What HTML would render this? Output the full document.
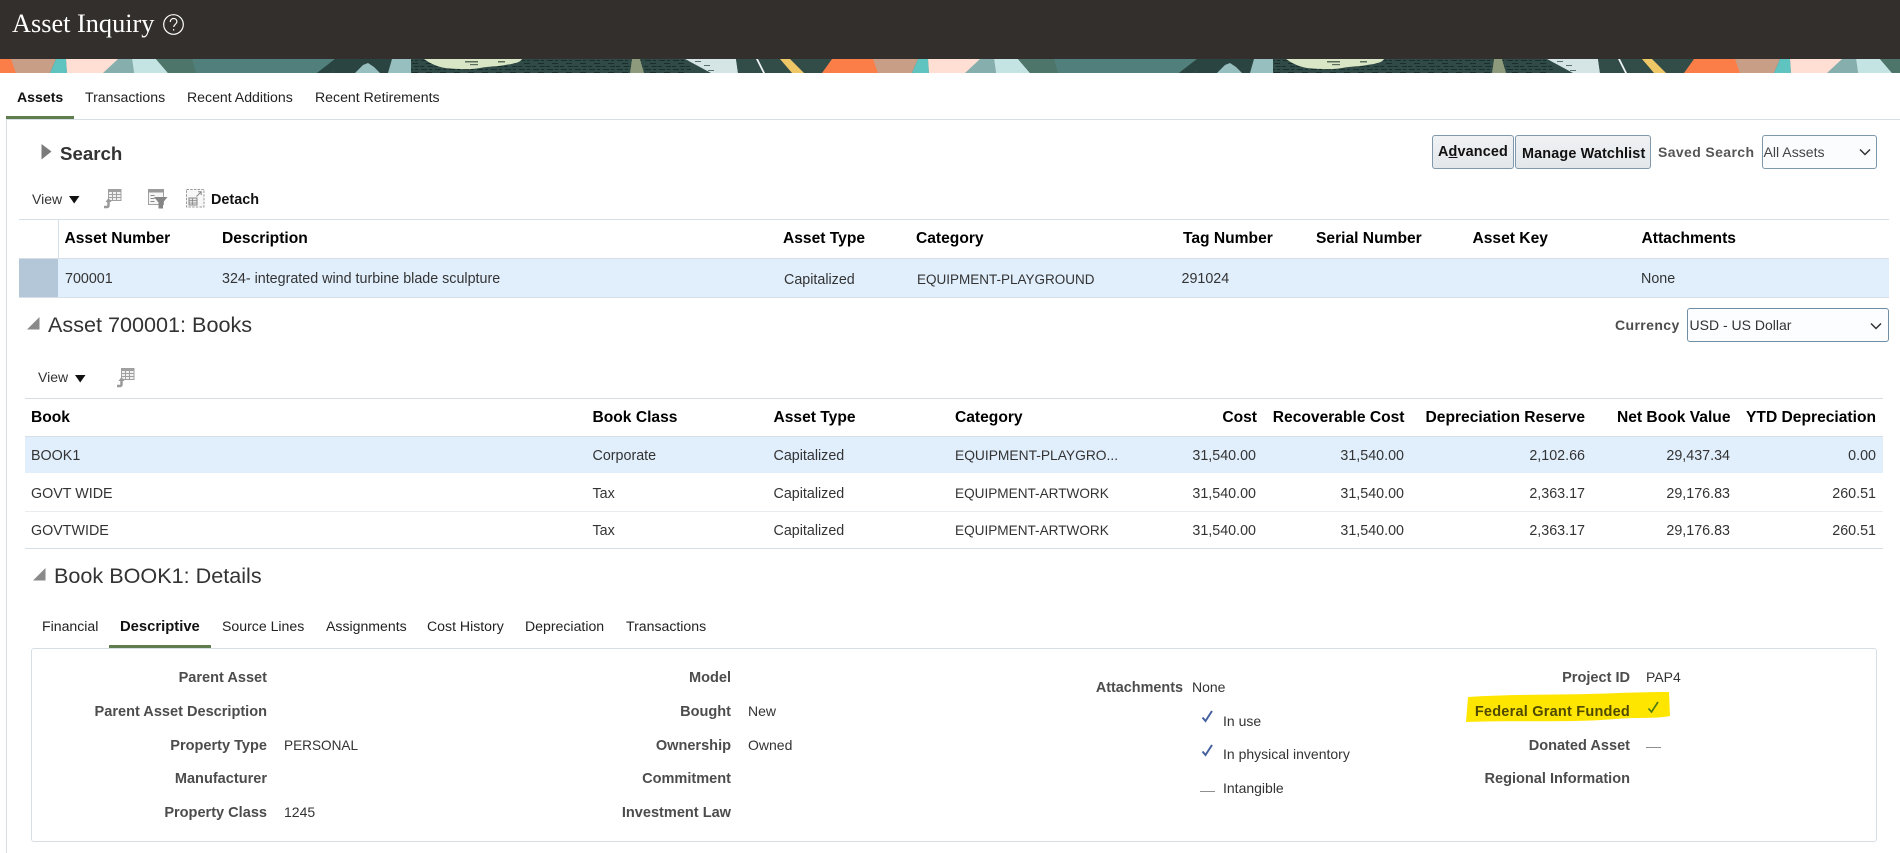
<!DOCTYPE html>
<html lang="en"><head><meta charset="utf-8"><title>Asset Inquiry</title>
<style>
html,body{margin:0;padding:0;background:#fff;width:1900px;height:853px;overflow:hidden}
body{position:relative;font-family:"Liberation Sans",sans-serif;color:#333;font-size:14.3px}
.t{position:absolute;line-height:20px;height:20px;white-space:nowrap}
.r{text-align:right}
.b{font-weight:bold;color:#000;font-size:15.6px}
.l{font-weight:bold;color:#4c4c4c;font-size:14.55px;text-align:right}
.tab{font-size:14.1px;color:#222}
.h{font-size:21.6px;color:#333;line-height:26px;height:26px}
.u{font-size:13.6px}
.box{position:absolute;box-sizing:border-box}
.ln{position:absolute;background:#d6dfe6}
svg{position:absolute;overflow:visible}
svg.clip{overflow:hidden}
</style></head><body>

<div class="box" style="left:0;top:0;width:1900px;height:59px;background:#332f2c"></div>
<svg class="clip" style="left:0;top:59px" width="1900" height="14" viewBox="0 0 1900 14">
<defs>
<pattern id="sp" width="14" height="9" patternUnits="userSpaceOnUse"><rect x="1" y="1" width="6" height="1" fill="#1a2e2b"/><rect x="9" y="1" width="3" height="1" fill="#1a2e2b"/><rect x="6" y="4" width="6" height="1" fill="#1a2e2b"/><rect x="0" y="7" width="4" height="1" fill="#1a2e2b"/><rect x="8" y="7" width="5" height="1" fill="#1a2e2b"/></pattern>
<g id="tile">
<rect x="0" y="0" width="862" height="14" fill="#2f4a46"/>
<polygon points="-30,0 15,0 18,14 -40,14" fill="#fb7e48"/>
<polygon points="11,0 56,0 50,14 16,14" fill="#c99e87"/>
<polygon points="56,0 66,0 67,14 50,14" fill="#5fc4bf"/>
<polygon points="66,0 132,0 104,14 67,14" fill="#ffdfd3"/>
<polygon points="118,0 132,0 134,14 103,14" fill="#86aeac"/>
<polygon points="132,0 156,0 168,14 134,14" fill="#c4e4e3"/>
<polygon points="156,0 200,0 199,14 168,14" fill="#4d7569"/>
<polygon points="192,0 335,0 317,14 196,14" fill="#517f7b"/>
<rect x="335" y="0" width="60" height="14" fill="#2a4541"/>
<polygon points="317,14 335,0 345,0 330,14" fill="#2a4541"/>
<polygon points="355,14 363,6 368,4 374,8 380,14" fill="#98bfbf"/>
<polygon points="388,14 392,0 411,0 411,14" fill="#98bfbf"/>
<rect x="411" y="0" width="300" height="14" fill="#304b47"/>
<rect x="411" y="0" width="280" height="14" fill="url(#sp)"/>
<path d="M424 0H522C520 4 512 5 505 6C495 8 490 7 480 9C470 11 455 10 445 9C435 7 430 4 424 0Z" fill="#d8e6c5"/>
<g fill="#5c6e5a"><rect x="465" y="2" width="13" height="1.500"/><rect x="498" y="2" width="7" height="1.500"/><rect x="470" y="5" width="8" height="1.200"/></g>
<polygon points="632,0 640,0 644,14 630,14" fill="#8d9b7c"/>
<polygon points="685,0 736,0 738,14 711,14" fill="#d5e5e5"/>
<g fill="#56706e"><rect x="695" y="2" width="6" height="1"/><rect x="704" y="6" width="6" height="1"/><rect x="708" y="11" width="6" height="1"/></g>
<polygon points="736,0 836,0 827,14 738,14" fill="#324c48"/>
<polygon points="756,0 758,0 765,14 763,14" fill="#eef4f3"/>
<polygon points="780,0 790,0 804,14 792,14" fill="#eec766"/>
<polygon points="836,0 862,0 862,14 825,14" fill="#fb7e48"/>
</g>
</defs>
<use href="#tile" x="0"/><use href="#tile" x="862"/><use href="#tile" x="1724"/>
</svg>

<div class="t" style="left:12px;top:10px;height:28px;line-height:28px;font-family:'Liberation Serif',serif;font-size:26.3px;color:#fff">Asset Inquiry</div>
<svg style="left:163px;top:14px" width="22" height="22" viewBox="0 0 22 22"><circle cx="10.500" cy="10.500" r="9.800" fill="none" stroke="#fff" stroke-width="1.200"/><path d="M7.300 8c0-2.200 1.500-3.500 3.300-3.500s3.300 1.200 3.300 3.200c0 2.400-3.200 2.800-3.200 5.300" fill="none" stroke="#fff" stroke-width="1.200"/><rect x="10" y="15" width="1.200" height="1.500" fill="#fff"/></svg>

<!-- main tabs -->
<div class="t tab" style="left:17px;top:87px;font-weight:bold;color:#111">Assets</div>
<div class="t tab" style="left:85px;top:87px">Transactions</div>
<div class="t tab" style="left:187px;top:87px">Recent Additions</div>
<div class="t tab" style="left:315px;top:87px">Recent Retirements</div>
<div class="ln" style="left:6px;top:119px;width:1894px;height:1px"></div>
<div class="box" style="left:6px;top:116px;width:68px;height:3px;background:#5f7d4f"></div>
<div class="ln" style="left:6px;top:119px;width:1px;height:734px"></div>

<!-- search -->
<svg style="left:41px;top:144px" width="11" height="16"><polygon points="0.500,0 10.500,7.500 0.500,15.500" fill="#7b7b7b"/></svg>
<div class="t" style="left:60px;top:143.500px;font-weight:bold;font-size:18.7px;color:#333">Search</div>

<div class="box" style="left:1432px;top:135px;width:82px;height:34px;border:1px solid #7f98ab;border-radius:3px;background:linear-gradient(#f0f2f4,#e3e7ea)"></div>
<div class="t" style="left:1438px;top:142px;font-weight:bold;color:#111;font-size:14.4px;letter-spacing:.15px">A<u>d</u>vanced</div>
<div class="box" style="left:1515px;top:135px;width:136px;height:34px;border:1px solid #7f98ab;border-radius:3px;background:linear-gradient(#f0f2f4,#e3e7ea)"></div>
<div class="t" style="left:1522px;top:144px;font-weight:bold;color:#111;font-size:14.4px;letter-spacing:.15px">Manage Watchlist</div>
<div class="t" style="left:1658px;top:142px;font-weight:bold;color:#555;font-size:14px;letter-spacing:.38px">Saved Search</div>
<div class="box" style="left:1762px;top:135px;width:115px;height:34px;border:1px solid #7d97aa;border-radius:3px;background:#fbfcfe"></div>
<div class="t" style="left:1763.500px;top:142px;color:#444;font-size:14.1px">All Assets</div>
<svg style="left:1859px;top:148px" width="12" height="8"><path d="M1 1.500L6 6.500L11 1.500" fill="none" stroke="#333" stroke-width="1.500"/></svg>

<!-- toolbar -->
<div class="t" style="left:32px;top:189px;font-size:14px">View</div>
<svg style="left:68px;top:196px" width="12" height="8"><polygon points="1,0 11.500,0 6.200,7.500" fill="#111"/></svg>
<svg style="left:103px;top:189px" width="19" height="20" viewBox="0 0 19 20"><rect x="5.500" y="0.500" width="12.500" height="11" fill="#f0f0f0" stroke="#a0a0a0"/><rect x="5.500" y="0.500" width="12.500" height="2.500" fill="#a0a0a0"/><path d="M5.500 5.500h12.500M5.500 8.500h12.500M9.500 0.500v11M13.500 0.500v11" stroke="#a0a0a0" stroke-width="1"/><path d="M1 18h3c1 0 1.500-.8 1.500-2v-4" fill="none" stroke="#9a9a9a" stroke-width="2.500"/><polygon points="2.500,13 5.500,9 8.500,13" fill="#9a9a9a"/></svg>
<svg style="left:148px;top:189px" width="20" height="20" viewBox="0 0 20 20"><rect x="0.500" y="0.500" width="15" height="15" fill="#f5f5f5" stroke="#a0a0a0"/><rect x="0.500" y="0.500" width="15" height="3" fill="#999"/><path d="M2.500 6.500h4M2.500 9.500h4M2.500 12.500h4" stroke="#888"/><polygon points="6,8 19.500,8 15,13.500 15,19.500 10.500,19.500 10.500,13.500" fill="#858585"/></svg>
<svg style="left:186px;top:189px" width="19" height="19" viewBox="0 0 19 19"><rect x="0.500" y="0.500" width="17.500" height="17.500" fill="#f7f7f7" stroke="#9a9a9a" stroke-dasharray="2.500 1.200"/><rect x="3" y="9" width="8" height="7" fill="#e6e6e6" stroke="#888"/><path d="M3 11.500h8M3 14h8M6.500 9v7" stroke="#888" stroke-width=".8"/><path d="M10.500 7.500L15 3M12 2.800h3.200V6" fill="none" stroke="#888"/></svg>
<div class="t" style="left:211px;top:190px;font-weight:bold;color:#111;font-size:14.4px">Detach</div>

<!-- table 1 -->
<div class="ln" style="left:19px;top:219px;width:1870px;height:1px"></div>
<div class="ln" style="left:58px;top:219px;width:1px;height:39px"></div>
<div class="ln" style="left:19px;top:258px;width:1870px;height:1px"></div>
<div class="box" style="left:19px;top:259px;width:1870px;height:38px;background:#e1effd"></div>
<div class="box" style="left:19px;top:259px;width:39px;height:38px;background:#b4c7d8"></div>
<div class="ln" style="left:19px;top:297px;width:1870px;height:1px"></div>
<div class="t b" style="left:64.500px;top:229px">Asset Number</div>
<div class="t b" style="left:222px;top:229px">Description</div>
<div class="t b" style="left:783px;top:229px">Asset Type</div>
<div class="t b" style="left:916px;top:229px">Category</div>
<div class="t b" style="left:1183px;top:229px">Tag Number</div>
<div class="t b" style="left:1316px;top:229px">Serial Number</div>
<div class="t b" style="left:1472.500px;top:229px">Asset Key</div>
<div class="t b" style="left:1641.500px;top:229px">Attachments</div>
<div class="t" style="left:65px;top:269px">700001</div>
<div class="t" style="left:222px;top:269px">324- integrated wind turbine blade sculpture</div>
<div class="t" style="left:784px;top:270px">Capitalized</div>
<div class="t u" style="left:917px;top:270px;font-size:13.500px">EQUIPMENT-PLAYGROUND</div>
<div class="t" style="left:1181.500px;top:269px">291024</div>
<div class="t" style="left:1641px;top:269px">None</div>

<!-- books -->
<svg style="left:27px;top:317px" width="13" height="13"><polygon points="12.500,0 12.500,12.500 0,12.500" fill="#8a8a8a"/></svg>
<div class="t h" style="left:48px;top:311.500px">Asset 700001: Books</div>
<div class="t" style="left:1615px;top:315px;font-weight:bold;color:#4c4c4c;font-size:14px;letter-spacing:.4px">Currency</div>
<div class="box" style="left:1687px;top:308px;width:202px;height:34px;border:1px solid #6f8da3;border-radius:3px;background:#fbfdff"></div>
<div class="t" style="left:1689.500px;top:315px;font-size:14px;color:#333">USD - US Dollar</div>
<svg style="left:1870px;top:322px" width="12" height="8"><path d="M1 1.500L6 6.500L11 1.500" fill="none" stroke="#333" stroke-width="1.500"/></svg>

<div class="t" style="left:38px;top:367px;font-size:14px">View</div>
<svg style="left:74px;top:375px" width="12" height="8"><polygon points="1,0 11.500,0 6.200,7.500" fill="#111"/></svg>
<svg style="left:116px;top:368px" width="19" height="20" viewBox="0 0 19 20"><rect x="5.500" y="0.500" width="12.500" height="11" fill="#f0f0f0" stroke="#a0a0a0"/><rect x="5.500" y="0.500" width="12.500" height="2.500" fill="#a0a0a0"/><path d="M5.500 5.500h12.500M5.500 8.500h12.500M9.500 0.500v11M13.500 0.500v11" stroke="#a0a0a0" stroke-width="1"/><path d="M1 18h3c1 0 1.500-.8 1.500-2v-4" fill="none" stroke="#9a9a9a" stroke-width="2.500"/><polygon points="2.500,13 5.500,9 8.500,13" fill="#9a9a9a"/></svg>

<div class="ln" style="left:25px;top:398px;width:1858px;height:1px"></div>
<div class="ln" style="left:25px;top:436px;width:1858px;height:1px"></div>
<div class="box" style="left:25px;top:437px;width:1858px;height:36px;background:#e1effd"></div>
<div class="box" style="left:25px;top:511px;width:1858px;height:1px;background:#e9edf0"></div>
<div class="ln" style="left:25px;top:548px;width:1858px;height:1px"></div>

<div class="t b" style="left:31px;top:408px">Book</div>
<div class="t b" style="left:592.500px;top:408px">Book Class</div>
<div class="t b" style="left:773.500px;top:408px">Asset Type</div>
<div class="t b" style="left:955px;top:408px">Category</div>
<div class="t b r" style="right:643px;top:408px">Cost</div>
<div class="t b r" style="right:495.500px;top:408px">Recoverable Cost</div>
<div class="t b r" style="right:315px;top:408px">Depreciation Reserve</div>
<div class="t b r" style="right:169.500px;top:408px">Net Book Value</div>
<div class="t b r" style="right:24px;top:408px">YTD Depreciation</div>

<div class="t" style="left:31px;top:446px">BOOK1</div>
<div class="t" style="left:592.500px;top:446px">Corporate</div>
<div class="t" style="left:773.500px;top:446px">Capitalized</div>
<div class="t u" style="left:955px;top:446px;font-size:13.800px">EQUIPMENT-PLAYGRO...</div>
<div class="t r" style="right:644px;top:446px">31,540.00</div>
<div class="t r" style="right:496px;top:446px">31,540.00</div>
<div class="t r" style="right:315px;top:446px">2,102.66</div>
<div class="t r" style="right:170px;top:446px">29,437.34</div>
<div class="t r" style="right:24px;top:446px">0.00</div>

<div class="t" style="left:31px;top:484px">GOVT WIDE</div>
<div class="t" style="left:592.500px;top:484px">Tax</div>
<div class="t" style="left:773.500px;top:484px">Capitalized</div>
<div class="t u" style="left:955px;top:484px">EQUIPMENT-ARTWORK</div>
<div class="t r" style="right:644px;top:484px">31,540.00</div>
<div class="t r" style="right:496px;top:484px">31,540.00</div>
<div class="t r" style="right:315px;top:484px">2,363.17</div>
<div class="t r" style="right:170px;top:484px">29,176.83</div>
<div class="t r" style="right:24px;top:484px">260.51</div>

<div class="t" style="left:31px;top:521px">GOVTWIDE</div>
<div class="t" style="left:592.500px;top:521px">Tax</div>
<div class="t" style="left:773.500px;top:521px">Capitalized</div>
<div class="t u" style="left:955px;top:521px">EQUIPMENT-ARTWORK</div>
<div class="t r" style="right:644px;top:521px">31,540.00</div>
<div class="t r" style="right:496px;top:521px">31,540.00</div>
<div class="t r" style="right:315px;top:521px">2,363.17</div>
<div class="t r" style="right:170px;top:521px">29,176.83</div>
<div class="t r" style="right:24px;top:521px">260.51</div>

<!-- details -->
<svg style="left:33px;top:568px" width="13" height="13"><polygon points="12.500,0 12.500,12.500 0,12.500" fill="#8a8a8a"/></svg>
<div class="t h" style="left:54px;top:562.500px">Book BOOK1: Details</div>

<div class="t tab" style="left:42px;top:616px">Financial</div>
<div class="t tab" style="left:120px;top:617px;font-weight:bold;color:#111;font-size:14.800px">Descriptive</div>
<div class="t tab" style="left:222px;top:616px">Source Lines</div>
<div class="t tab" style="left:326px;top:616px">Assignments</div>
<div class="t tab" style="left:427px;top:616px">Cost History</div>
<div class="t tab" style="left:525px;top:616px">Depreciation</div>
<div class="t tab" style="left:626px;top:616px">Transactions</div>
<div class="box" style="left:31px;top:648px;width:1846px;height:194px;border:1px solid #d6dfe6;border-radius:3px"></div>
<div class="box" style="left:109px;top:645px;width:102px;height:3px;background:#5f7d4f"></div>

<div class="t l" style="right:1633px;top:668px">Parent Asset</div>
<div class="t l" style="right:1633px;top:702px">Parent Asset Description</div>
<div class="t l" style="right:1633px;top:736px">Property Type</div>
<div class="t l" style="right:1633px;top:769px">Manufacturer</div>
<div class="t l" style="right:1633px;top:803px">Property Class</div>
<div class="t u" style="left:284px;top:736px">PERSONAL</div>
<div class="t" style="left:284px;top:802px;font-size:14px">1245</div>

<div class="t l" style="right:1169px;top:668px">Model</div>
<div class="t l" style="right:1169px;top:702px">Bought</div>
<div class="t l" style="right:1169px;top:736px">Ownership</div>
<div class="t l" style="right:1169px;top:769px">Commitment</div>
<div class="t l" style="right:1169px;top:803px">Investment Law</div>
<div class="t" style="left:748px;top:701px;font-size:14px">New</div>
<div class="t" style="left:748px;top:735px;font-size:14px">Owned</div>

<div class="t l" style="right:717px;top:677.500px;font-size:14.400px">Attachments</div>
<div class="t" style="left:1192px;top:677px;font-size:14px">None</div>
<svg style="left:1201px;top:710px" width="13" height="13" viewBox="0 0 13 13"><path d="M1.500 7.500L4.500 11L11 1" fill="none" stroke="#44619f" stroke-width="2"/></svg>
<div class="t" style="left:1223px;top:711px;font-size:14px">In use</div>
<svg style="left:1201px;top:744px" width="13" height="13" viewBox="0 0 13 13"><path d="M1.500 7.500L4.500 11L11 1" fill="none" stroke="#44619f" stroke-width="2"/></svg>
<div class="t" style="left:1223px;top:744px;font-size:14px">In physical inventory</div>
<div class="box" style="left:1200px;top:791px;width:15px;height:1px;background:#8f8f8f"></div>
<div class="t" style="left:1223px;top:778px;font-size:14px">Intangible</div>

<svg style="left:1466px;top:692px" width="205" height="32" viewBox="0 0 205 32"><path d="M2 5C50 2 100 3 140 1.500C165 .5 185 0 203 0L204 24C190 27 170 25 150 27C100 31 50 28 0 30Z" fill="#ffe600"/></svg>
<div class="t l" style="right:270px;top:668px">Project ID</div>
<div class="t l" style="right:270px;top:702px;color:#4f4a00;letter-spacing:.2px">Federal Grant Funded</div>
<div class="t l" style="right:270px;top:736px">Donated Asset</div>
<div class="t l" style="right:270px;top:769px">Regional Information</div>
<div class="t" style="left:1646px;top:667px;font-size:14px">PAP4</div>
<svg style="left:1647px;top:701px" width="13" height="13" viewBox="0 0 13 13"><path d="M1.500 7.500L4.500 11L11 1" fill="none" stroke="#4d7a12" stroke-width="1.700"/></svg>
<div class="box" style="left:1646px;top:747px;width:15px;height:1px;background:#8f8f8f"></div>

</body></html>
